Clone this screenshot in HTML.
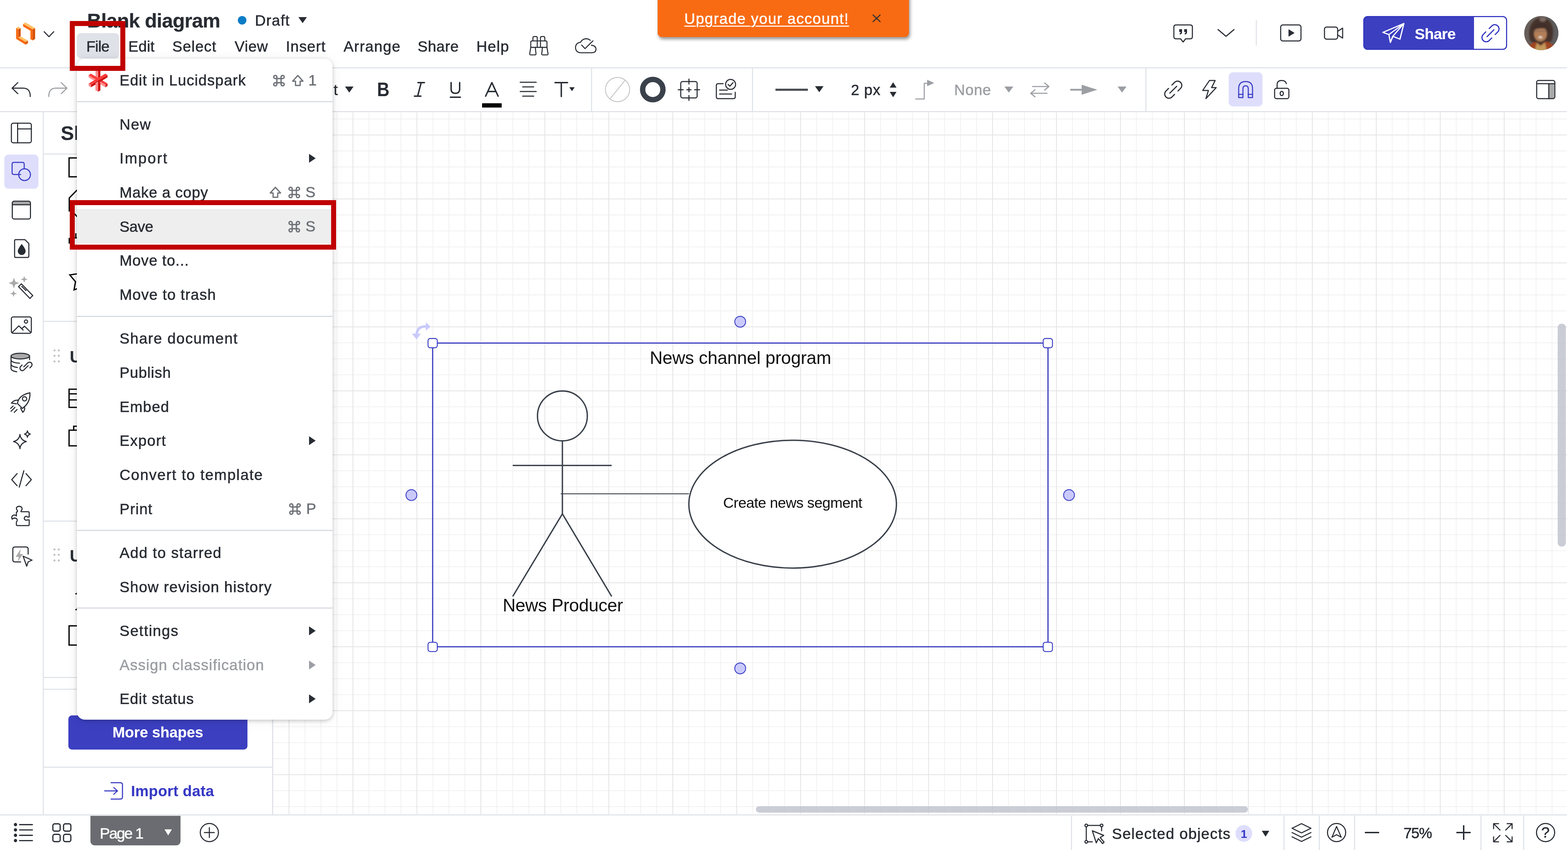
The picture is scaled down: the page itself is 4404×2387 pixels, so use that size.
<!DOCTYPE html>
<html><head><meta charset="utf-8"><title>Blank diagram</title>
<style>
html,body{margin:0;padding:0;background:#fff;}
body{width:4404px;height:2387px;position:relative;overflow:hidden;font-family:'Liberation Sans', sans-serif;}
.a{position:absolute;box-sizing:border-box;}
.t{position:absolute;white-space:pre;line-height:1;-webkit-text-stroke:0.7px currentColor;}
svg{overflow:visible}
.k{fill:none;stroke:#282c33;stroke-width:4;stroke-linecap:round;stroke-linejoin:round}
.g{fill:none;stroke:#9b9ea3;stroke-width:4;stroke-linecap:round;stroke-linejoin:round}
.bl{fill:none;stroke:#3a3dc4;stroke-width:4;stroke-linecap:round;stroke-linejoin:round}
</style></head><body>
<div id="root" style="position:absolute;left:0;top:0;width:4404px;height:2387px;will-change:transform;">
<div class="a" style="left:765px;top:313px;width:3639px;height:1976px;background-color:#fff;background-image:linear-gradient(to right,#e3e3e5 2px,transparent 2px),linear-gradient(to bottom,#e3e3e5 2px,transparent 2px),linear-gradient(to right,#f0f0f1 2px,transparent 2px),linear-gradient(to bottom,#f0f0f1 2px,transparent 2px);background-size:179.6500px 179.6500px,179.6500px 179.6500px,44.9125px 44.9125px,44.9125px 44.9125px;background-position:45.70px 65.05px;"></div>
<svg class="a" style="left:0;top:0" width="4404" height="2387" viewBox="0 0 4404 2387"><rect x="1215.2" y="963.4" width="1728.3" height="852.9" fill="none" stroke="#3538bd" stroke-width="3.2"/><g fill="none" stroke="#3a414a" stroke-width="3.8" stroke-linecap="butt"><circle cx="1579.6" cy="1168" r="70"/><path d="M1579.6 1238V1443M1440 1307.2H1718M1579.6 1443L1440 1675M1579.6 1443L1718 1675"/><ellipse cx="2226.3" cy="1415.8" rx="291.5" ry="179.5" fill="#fff"/></g><path d="M1575 1386.7H1935" stroke="#3a414a" stroke-width="2.5" fill="none"/><rect x="1202.2" y="950.6" width="26" height="26" rx="6" fill="#fff" stroke="#3a3dc4" stroke-width="2.6"/><rect x="2930.0" y="950.6" width="26" height="26" rx="6" fill="#fff" stroke="#3a3dc4" stroke-width="2.6"/><rect x="1202.2" y="1803.7" width="26" height="26" rx="6" fill="#fff" stroke="#3a3dc4" stroke-width="2.6"/><rect x="2930.0" y="1803.7" width="26" height="26" rx="6" fill="#fff" stroke="#3a3dc4" stroke-width="2.6"/><circle cx="2079.0" cy="903.5" r="15.3" fill="#c9c9fb" stroke="#3a3dc4" stroke-width="2.4"/><circle cx="1155.5" cy="1390.3" r="15.3" fill="#c9c9fb" stroke="#3a3dc4" stroke-width="2.4"/><circle cx="3002.5" cy="1390.3" r="15.3" fill="#c9c9fb" stroke="#3a3dc4" stroke-width="2.4"/><circle cx="2079.0" cy="1877.0" r="15.3" fill="#c9c9fb" stroke="#3a3dc4" stroke-width="2.4"/><g fill="none" stroke="#c9c9fb" stroke-width="7"><path d="M1170 940 Q1172 915 1198 917"/></g><path d="M1196 905 L1209 917 L1196 929Z M1157 937 L1170 953 L1182 937Z" fill="#c9c9fb"/></svg>
<span class="t" style="left:1825.0px;top:979.7px;font-size:50px;font-weight:400;color:#111;letter-spacing:-0.24px;-webkit-text-stroke:0;">News channel program</span>
<span class="t" style="left:2031.0px;top:1390.9px;font-size:41.5px;font-weight:400;color:#111;letter-spacing:-0.70px;-webkit-text-stroke:0;">Create news segment</span>
<span class="t" style="left:1412.0px;top:1674.7px;font-size:50px;font-weight:400;color:#111;letter-spacing:-0.33px;-webkit-text-stroke:0;">News Producer</span>
<div class="a" style="left:2123.0px;top:2263.5px;width:1382.0px;height:18.5px;background:rgba(190,194,204,.82);border-radius:10px;"></div>
<div class="a" style="left:4375.0px;top:909.0px;width:22.5px;height:625.5px;background:rgba(190,194,204,.82);border-radius:11px;"></div>
<div class="a" style="left:0.0px;top:313.0px;width:122.0px;height:1976.0px;background:#fff;"></div>
<div class="a" style="left:120.0px;top:313.0px;width:647.0px;height:1976.0px;background:#fff;border-left:3px solid #dfe3e8;border-right:3px solid #dfe3e8;"></div>
<div class="a" style="left:12.0px;top:434.0px;width:95.5px;height:96.0px;background:#dedefc;border-radius:12px;"></div>
<svg class="a" style="left:30.0px;top:344.0px;" width="60.0" height="59.0" viewBox="0 0 60 59"><g class="k" style="stroke-width:3"><rect x="2" y="2" width="56" height="55" rx="5"/><path d="M19.500 2V57M19.500 18H58"/></g></svg>
<svg class="a" style="left:32.0px;top:454.0px;" width="56.0" height="55.0" viewBox="0 0 56 55"><g class="bl" style="stroke-width:3"><path d="M26 36H7Q2 36 2 31V7Q2 2 7 2H31Q36 2 36 7V20"/><circle cx="37" cy="36.500" r="16.500"/></g></svg>
<svg class="a" style="left:32.0px;top:563.0px;" width="56.0" height="54.0" viewBox="0 0 55 54"><rect x="3" y="3" width="49" height="9" fill="#aaa"/><g class="k" style="stroke-width:3"><rect x="2" y="2" width="51" height="50" rx="5"/><path d="M2 12H53"/></g></svg>
<svg class="a" style="left:39.0px;top:671.0px;" width="44.0" height="54.0" viewBox="0 0 44 54"><g class="k" style="stroke-width:3"><path d="M5 2H31L42 13V48Q42 52 38 52H5Q2 52 2 48V5Q2 2 5 2Z"/></g><path d="M22 14Q33 28 33 34A11 11 0 0 1 11 34Q11 28 22 14Z" fill="#282c33"/></svg>
<svg class="a" style="left:24.0px;top:775.0px;" width="72.0" height="65.0" viewBox="0 0 72 65"><path d="M15 5L19 16L30 20L19 24L15 35L11 24L0 20L11 16Z M44 0L46.500 7L54 9.500L46.500 12L44 19L41.500 12L34 9.500L41.500 7Z M14 40L16.500 47L24 49.500L16.500 52L14 59L11.500 52L4 49.500L11.500 47Z" fill="#aaa"/><g class="k" style="stroke-width:3"><path d="M36 22L28 30L60 63L68 55Z"/><path d="M37 29L49 41"/></g></svg>
<svg class="a" style="left:30.0px;top:888.0px;" width="60.0" height="50.0" viewBox="0 0 60 50"><g class="k" style="stroke-width:3"><rect x="2" y="2" width="56" height="46" rx="5"/><circle cx="43" cy="15" r="4.500"/><path d="M4 46L23 27L35 39M31 35L39 28L56 45"/></g></svg>
<svg class="a" style="left:29.0px;top:990.0px;" width="64.0" height="62.0" viewBox="0 0 64 62"><ellipse cx="28" cy="10" rx="26" ry="8" fill="#aaa"/><g class="k" style="stroke-width:3"><ellipse cx="28" cy="10" rx="26" ry="8"/><path d="M2 10V46Q4 52 18 54M54 10V20M2 22Q6 29 26 30M2 34Q5 40 20 42"/><path d="M38 40L49 29Q54 25 59 29Q63 34 59 39L55 43M50 37L38 49Q34 53 29 49Q25 44 29 39L33 35" /></g></svg>
<svg class="a" style="left:28.0px;top:1100.0px;" width="62.0" height="60.0" viewBox="0 0 62 60"><g class="k" style="stroke-width:3"><path d="M21 33Q24 10 56 3Q58 30 35 47Z"/><circle cx="41" cy="20" r="6"/><path d="M24 24Q12 22 4 32L18 34M40 42Q44 50 36 58L30 46"/><path d="M14 44L3 55M20 50L12 58M9 40L2 47"/></g></svg>
<svg class="a" style="left:34.0px;top:1208.0px;" width="54.0" height="54.0" viewBox="0 0 54 54"><g class="k" style="stroke-width:3"><path d="M22 12Q24 28 40 32Q24 36 22 52Q20 36 4 32Q20 28 22 12Z"/><path d="M43 2Q44 9 51 11Q44 13 43 20Q42 13 35 11Q42 9 43 2Z"/></g></svg>
<svg class="a" style="left:31.0px;top:1320.0px;" width="59.0" height="50.0" viewBox="0 0 59 50"><g class="k" style="stroke-width:3"><path d="M17 10L2 27L17 44M42 10L57 27L42 44M36 2L23 48"/></g></svg>
<svg class="a" style="left:29.0px;top:1420.0px;" width="59.0" height="61.0" viewBox="0 0 59 61"><g class="k" style="stroke-width:3"><path d="M20 17V14Q14 7 20 3Q27 0 32 5Q35 10 30 15V17H50Q53 17 53 20V32H49Q42 27 39 35Q40 43 49 40H53V53Q53 56 50 56H20Q17 56 17 53V46Q22 40 17 36Q10 33 5 38Q2 30 8 27Q13 25 17 29V20Q17 17 20 17Z"/></g></svg>
<svg class="a" style="left:34.0px;top:1534.0px;" width="60.0" height="60.0" viewBox="0 0 60 60"><path d="M24 8L10 30H19L15 44L31 22H22Z" fill="#aaa"/><g class="k" style="stroke-width:3"><path d="M45 22V8Q45 2 39 2H8Q2 2 2 8V38Q2 44 8 44H24"/><path d="M31 28L56 39L45 44L41 56Z" fill="#fff"/></g></svg>
<span class="t" style="left:170.5px;top:346.1px;font-size:56px;font-weight:700;color:#282c33;letter-spacing:0.00px;-webkit-text-stroke:0.15px currentColor;">Shapes</span>
<div class="a" style="left:123.0px;top:430.5px;width:641.0px;height:3.0px;background:#dfe3e8;"></div>
<div class="a" style="left:123.0px;top:900.9px;width:641.0px;height:3.0px;background:#dfe3e8;"></div>
<div class="a" style="left:123.0px;top:1461.5px;width:641.0px;height:3.0px;background:#dfe3e8;"></div>
<div class="a" style="left:123.0px;top:1900.5px;width:641.0px;height:3.0px;background:#dfe3e8;"></div>
<div class="a" style="left:123.0px;top:1933.5px;width:641.0px;height:3.0px;background:#dfe3e8;"></div>
<div class="a" style="left:123.0px;top:2152.5px;width:641.0px;height:3.0px;background:#dfe3e8;"></div>
<div class="a" style="left:191.5px;top:2008.5px;width:503.0px;height:96.0px;background:#3c3fc0;border-radius:10px;"></div>
<span class="t" style="left:316.0px;top:2036.4px;font-size:42px;font-weight:700;color:#fff;letter-spacing:-0.18px;-webkit-text-stroke:0.15px currentColor;">More shapes</span>
<span class="t" style="left:368.0px;top:2201.4px;font-size:42px;font-weight:700;color:#3639c4;letter-spacing:0.43px;-webkit-text-stroke:0.15px currentColor;">Import data</span>
<svg class="a" style="left:292.0px;top:2196.0px;" width="54.0" height="50.0" viewBox="0 0 54.0 50.0"><path class="bl" style="stroke:#3639c4;stroke-width:3" d="M20 2H46Q52 2 52 8V42Q52 48 46 48H20M2 25H38M27.500 15.500L38 25L27.500 34.500"/></svg>
<svg class="a" style="left:0;top:0" width="300" height="2000" viewBox="0 0 300 2000"><g fill="none" stroke="#000" stroke-width="3.6"><rect x="194" y="443.500" width="60" height="53" /><path d="M230 520L194.500 556V594" /><path d="M205 596L222 614M204 668H230M213 655V668" /><path d="M194.500 668V684" /><path d="M230 767L196 772L212 791L208 814L230 806" /><path d="M254 1093H194V1144H254M194 1106H254M194 1123H254" /><path d="M254 1208H207V1197H254M207 1208H194V1252H254" /><rect x="194" y="1757.500" width="60" height="54" /><path d="M212 1668.500L216 1666M212 1713L216 1710.500" /></g></svg>
<div class="a" style="left:150.0px;top:980.5px;width:6.0px;height:6.0px;background:#c4c6c9;border-radius:50%;"></div>
<div class="a" style="left:162.0px;top:980.5px;width:6.0px;height:6.0px;background:#c4c6c9;border-radius:50%;"></div>
<div class="a" style="left:150.0px;top:996.0px;width:6.0px;height:6.0px;background:#c4c6c9;border-radius:50%;"></div>
<div class="a" style="left:162.0px;top:996.0px;width:6.0px;height:6.0px;background:#c4c6c9;border-radius:50%;"></div>
<div class="a" style="left:150.0px;top:1011.5px;width:6.0px;height:6.0px;background:#c4c6c9;border-radius:50%;"></div>
<div class="a" style="left:162.0px;top:1011.5px;width:6.0px;height:6.0px;background:#c4c6c9;border-radius:50%;"></div>
<div class="a" style="left:150.0px;top:1539.5px;width:6.0px;height:6.0px;background:#c4c6c9;border-radius:50%;"></div>
<div class="a" style="left:162.0px;top:1539.5px;width:6.0px;height:6.0px;background:#c4c6c9;border-radius:50%;"></div>
<div class="a" style="left:150.0px;top:1555.0px;width:6.0px;height:6.0px;background:#c4c6c9;border-radius:50%;"></div>
<div class="a" style="left:162.0px;top:1555.0px;width:6.0px;height:6.0px;background:#c4c6c9;border-radius:50%;"></div>
<div class="a" style="left:150.0px;top:1570.5px;width:6.0px;height:6.0px;background:#c4c6c9;border-radius:50%;"></div>
<div class="a" style="left:162.0px;top:1570.5px;width:6.0px;height:6.0px;background:#c4c6c9;border-radius:50%;"></div>
<span class="t" style="left:196.0px;top:978.6px;font-size:46px;font-weight:700;color:#282c33;letter-spacing:0.00px;-webkit-text-stroke:0.15px currentColor;">U</span>
<span class="t" style="left:196.0px;top:1538.1px;font-size:46px;font-weight:700;color:#282c33;letter-spacing:0.00px;-webkit-text-stroke:0.15px currentColor;">U</span>
<div class="a" style="left:0.0px;top:0.0px;width:4404.0px;height:190.0px;background:#fff;"></div>
<div class="a" style="left:0.0px;top:188.5px;width:4404.0px;height:3.0px;background:#dfe3e8;"></div>
<div class="a" style="left:0.0px;top:191.5px;width:4404.0px;height:120.0px;background:#fff;"></div>
<div class="a" style="left:0.0px;top:311.5px;width:4404.0px;height:3.0px;background:#dfe3e8;"></div>
<svg class="a" style="left:0;top:0" width="200" height="190" viewBox="0 0 200 190"><g transform="translate(30,50) scale(0.06447)"><path d="M235 445L335 500V860L650 1050V1170L235 915Z" fill="#f96b13"/><path d="M335 500L435 450V800L335 860Z" fill="#d4500a"/><path d="M235 445L335 385L435 450L335 500Z" fill="#ffc266"/><path d="M335 860L435 805L755 995L650 1050Z" fill="#ffc266"/><path d="M650 1050L755 995V1105L650 1170Z" fill="#dc5a0c"/><path d="M540 265L960 500V985L860 930V565L540 375Z" fill="#f96b13"/><path d="M960 500L1065 445V920L960 985Z" fill="#d4500a"/><path d="M540 265L640 200L1065 445L960 500Z" fill="#ffc266"/></g></svg>
<svg class="a" style="left:122.0px;top:87.0px;" width="31.0" height="19.0" viewBox="0 0 31.0 19.0"><path class="k" style="stroke-width:3" d="M2 2L15.5 16L29 2"/></svg>
<span class="t" style="left:244.5px;top:30.1px;font-size:56px;font-weight:700;color:#282c33;letter-spacing:-0.95px;-webkit-text-stroke:0.3px currentColor;">Blank diagram</span>
<div class="a" style="left:668.0px;top:45.0px;width:24.0px;height:24.0px;background:#0b7cc7;border-radius:50%;"></div>
<span class="t" style="left:716.0px;top:37.4px;font-size:42px;font-weight:400;color:#282c33;letter-spacing:1.50px;">Draft</span>
<svg class="a" style="left:838.0px;top:48.0px;" width="24.0" height="18.0" viewBox="0 0 24.0 18.0"><path d="M0 0H24L12 17Z" fill="#282c33"/></svg>
<div class="a" style="left:215.5px;top:93.0px;width:118.0px;height:71.0px;background:#dfe2e8;border-radius:11px;"></div>
<span class="t" style="left:242.5px;top:110.4px;font-size:42px;font-weight:400;color:#282c33;letter-spacing:-0.83px;">File</span>
<span class="t" style="left:360.6px;top:110.4px;font-size:42px;font-weight:400;color:#282c33;letter-spacing:0.34px;">Edit</span>
<span class="t" style="left:484.0px;top:110.4px;font-size:42px;font-weight:400;color:#282c33;letter-spacing:1.25px;">Select</span>
<span class="t" style="left:659.0px;top:110.4px;font-size:42px;font-weight:400;color:#282c33;letter-spacing:0.91px;">View</span>
<span class="t" style="left:803.0px;top:110.4px;font-size:42px;font-weight:400;color:#282c33;letter-spacing:1.19px;">Insert</span>
<span class="t" style="left:965.0px;top:110.4px;font-size:42px;font-weight:400;color:#282c33;letter-spacing:1.60px;">Arrange</span>
<span class="t" style="left:1173.0px;top:110.4px;font-size:42px;font-weight:400;color:#282c33;letter-spacing:0.73px;">Share</span>
<span class="t" style="left:1338.0px;top:110.4px;font-size:42px;font-weight:400;color:#282c33;letter-spacing:1.54px;">Help</span>
<svg class="a" style="left:0;top:0" width="1800" height="190" viewBox="0 0 1800 190"><g transform="translate(1460,80) scale(0.10093)" fill="none" stroke="#282c33" stroke-width="28" stroke-linecap="round" stroke-linejoin="round"><path d="M365 345V260Q365 225 400 225H450Q485 225 485 260V345M575 345V260Q575 225 610 225H660Q695 225 695 260V345"/><path d="M305 525V380Q305 345 340 345H720Q755 345 755 380V525M485 345V525M575 345V525M305 525H755"/><path d="M305 525L275 700Q272 735 305 735H420Q452 735 450 700L430 525M755 525L785 700Q788 735 755 735H640Q608 735 610 700L630 525"/><path d="M1990 465Q2120 480 2120 580Q2115 675 2000 675H1700Q1555 670 1550 530Q1555 400 1690 385Q1740 290 1840 285Q1910 285 1960 330"/><path d="M1720 460L1815 560L2035 345"/></g></svg>
<div class="a" style="left:1847.0px;top:-20.0px;width:706.0px;height:124.3px;background:#f96b13;border-radius:12px;box-shadow:3px 6px 10px rgba(0,0,0,.42);"></div>
<span class="t" style="left:1922.0px;top:32.4px;font-size:42px;font-weight:400;color:#fff;letter-spacing:1.80px;text-decoration:underline;text-decoration-thickness:2.5px;text-underline-offset:5px;">Upgrade your account!</span>
<svg class="a" style="left:2450.0px;top:40.0px;" width="24.0" height="23.0" viewBox="0 0 24.0 23.0"><path d="M2 2L22 21M22 2L2 21" stroke="#282c33" stroke-width="2.8" fill="none" stroke-linecap="round"/></svg>
<svg class="a" style="left:3295.0px;top:68.0px;" width="56.0" height="53.0" viewBox="0 0 56 53"><g class="k" style="stroke-width:3"><path d="M8 2H48Q54 2 54 8V35Q54 41 48 41H35L28 50L21 41H8Q2 41 2 35V8Q2 2 8 2Z"/></g><path d="M17 14h8v8q0 6-6 7l-1-3q3-1 3-4h-4zM31 14h8v8q0 6-6 7l-1-3q3-1 3-4h-4z" fill="#282c33"/></svg>
<svg class="a" style="left:3419.0px;top:81.0px;" width="49.0" height="24.0" viewBox="0 0 49.0 24.0"><path class="k" style="stroke-width:3" d="M2 2L24.5 21L47 2"/></svg>
<div class="a" style="left:3526.5px;top:57.0px;width:3.0px;height:71.0px;background:#dfe3e8;"></div>
<svg class="a" style="left:3595.0px;top:68.0px;" width="61.0" height="49.0" viewBox="0 0 61.0 49.0"><rect class="k" style="stroke-width:3" x="2" y="2" width="57" height="45" rx="6"/><path d="M24 14L41 24.5L24 35Z" fill="#282c33"/></svg>
<svg class="a" style="left:3718.0px;top:74.0px;" width="55.0" height="38.0" viewBox="0 0 55.0 38.0"><g class="k" style="stroke-width:3"><rect x="2" y="2" width="37" height="34" rx="6"/><path d="M39 14L53 5V33L39 24"/></g></svg>
<div class="a" style="left:3829.0px;top:45.0px;width:404.3px;height:95.4px;background:#3c3fc0;border-radius:12px;border:3px solid #3336c0;"></div>
<div class="a" style="left:4140.3px;top:48.0px;width:90.0px;height:89.4px;background:#fff;border-radius:0 9px 9px 0;"></div>
<svg class="a" style="left:3882.0px;top:64.0px;" width="63.0" height="57.0" viewBox="0 0 63 57"><g fill="none" stroke="#fff" stroke-width="3.4" stroke-linejoin="round"><path d="M2 27L61 2L50 46L30 38L23 55L19 33Z"/><path d="M61 2L19 33M61 2L30 38M23 55L30 38"/></g></svg>
<span class="t" style="left:3973.5px;top:73.6px;font-size:43px;font-weight:700;color:#fff;letter-spacing:-1.00px;-webkit-text-stroke:0.15px currentColor;">Share</span>
<svg class="a" style="left:0;top:0" width="4404" height="320" viewBox="0 0 4404 320"><g transform="translate(4186.3,93.3) rotate(-45)" fill="none" stroke="#2f32c2" stroke-width="3.1" stroke-linecap="round"><path d="M6.8 -11.900H17.100A11.900 11.900 0 0 1 17.100 11.900H6.800"/><path d="M-6.800 -11.900H-17.100A11.900 11.900 0 0 0 -17.100 11.900H-6.800"/><path d="M-13.600 0H13.600"/></g><g transform="translate(3295.3,251.9) rotate(-45)" fill="none" stroke="#282c33" stroke-width="3.1" stroke-linecap="round"><path d="M6.8 -11.900H17.100A11.900 11.900 0 0 1 17.100 11.900H6.800"/><path d="M-6.800 -11.900H-17.100A11.900 11.900 0 0 0 -17.100 11.900H-6.800"/><path d="M-13.600 0H13.600"/></g></svg>
<svg class="a" style="left:4281.2px;top:44.800px" width="96" height="96" viewBox="0 0 96 96"><defs><clipPath id="avc"><circle cx="48" cy="48" r="48"/></clipPath><filter id="avb" x="-20%" y="-20%" width="140%" height="140%"><feGaussianBlur stdDeviation="2.2"/></filter></defs><g clip-path="url(#avc)"><rect width="96" height="96" fill="#675e5a"/><rect x="62" width="34" height="96" fill="#5d5b5b"/><g filter="url(#avb)"><path d="M16 68Q8 30 30 11Q50 -2 70 13Q88 34 77 70Q60 80 46 80Q28 80 16 68Z" fill="#453229"/><ellipse cx="45.500" cy="50" rx="18" ry="21.500" fill="#b27f58"/><path d="M22 42Q28 20 50 20Q70 22 72 44Q60 33 46 35Q34 35 22 42Z" fill="#3f2e29"/><ellipse cx="52" cy="10" rx="9" ry="6" fill="#7d6a64"/><path d="M6 100Q10 78 32 73L46 82L60 72Q86 76 92 100Z" fill="#a04420"/><path d="M36 75L46 85L58 74L64 100L28 100Z" fill="#c29a5a"/><ellipse cx="45.500" cy="59.500" rx="5.500" ry="2.400" fill="#f3eae4"/><path d="M27 42H62" stroke="#6a5a60" stroke-width="2"/></g></g></svg>
<svg class="a" style="left:32.0px;top:230.0px;" width="56.0" height="43.0" viewBox="0 0 56 43"><path class="k" style="stroke-width:3" d="M18 2L2 17.5L18 33M2 17.5H32Q53 17 53 41"/></svg>
<svg class="a" style="left:134.0px;top:230.0px;" width="56.0" height="43.0" viewBox="0 0 56 43"><path class="g" style="stroke-width:3" d="M38 2L54 17.5L38 33M54 17.5H24Q3 17 3 41"/></svg>
<span class="t" style="left:937.0px;top:232.4px;font-size:42px;font-weight:400;color:#282c33;letter-spacing:0.00px;">t</span>
<svg class="a" style="left:969.0px;top:243.0px;" width="24.0" height="18.0" viewBox="0 0 24.0 18.0"><path d="M0 0H24L12 17Z" fill="#282c33"/></svg>
<span class="t" style="left:1059.0px;top:222.6px;font-size:56px;font-weight:700;color:#282c33;letter-spacing:0.00px;-webkit-text-stroke:0;transform:scaleX(.86);transform-origin:left;">B</span>
<svg class="a" style="left:1162.0px;top:230.0px;" width="32.0" height="42.0" viewBox="0 0 32 42"><path class="k" style="stroke-width:4" d="M12 2H30M2 40H20M21 2L11 40"/></svg>
<svg class="a" style="left:1262.0px;top:230.0px;" width="34.0" height="46.0" viewBox="0 0 34 46"><path class="k" style="stroke-width:4" d="M5 2V20Q5 32 17 32Q29 32 29 20V2M3 43H31"/></svg>
<svg class="a" style="left:1362.0px;top:230.0px;" width="39.0" height="42.0" viewBox="0 0 39 42"><path class="k" style="stroke-width:4" d="M2 40L19.5 2L37 40M8 27H31"/></svg>
<div class="a" style="left:1354.0px;top:290.0px;width:55.0px;height:12.0px;background:#000;"></div>
<svg class="a" style="left:1459.0px;top:229.0px;" width="49.0" height="43.0" viewBox="0 0 49 43"><path class="k" style="stroke-width:3" d="M2 2H47M9 15H40M2 28H47M9 41H40"/></svg>
<svg class="a" style="left:1557.0px;top:229.0px;" width="57.0" height="44.0" viewBox="0 0 57 44"><path class="k" style="stroke-width:4" d="M2 3H37M19.5 3V42"/><path d="M42 16H57L49.5 27Z" fill="#282c33"/></svg>
<div class="a" style="left:1660.0px;top:191.5px;width:3.0px;height:120.0px;background:#dfe3e8;"></div>
<svg class="a" style="left:1698.0px;top:215.0px;" width="73.0" height="73.0" viewBox="0 0 73.0 73.0"><circle cx="36.5" cy="36.5" r="34" fill="#fff" stroke="#c4c4c4" stroke-width="2.4"/><path d="M15 63L58 10" stroke="#c4c4c4" stroke-width="2.4"/></svg>
<svg class="a" style="left:1797.0px;top:215.0px;" width="73.0" height="73.0" viewBox="0 0 73.0 73.0"><circle cx="36.5" cy="36.5" r="28.5" fill="#fff" stroke="#3a414a" stroke-width="15"/></svg>
<svg class="a" style="left:1905.0px;top:222.0px;" width="60.0" height="60.0" viewBox="0 0 60 60"><g class="k" style="stroke-width:3"><rect x="7" y="7" width="46" height="46" rx="5"/><path d="M30 0V14M30 46V60M0 30H14M46 30H60M24 30H36M30 24V36"/></g></svg>
<svg class="a" style="left:2009.0px;top:221.0px;" width="60.0" height="58.0" viewBox="0 0 60 58"><g class="k" style="stroke-width:3"><path d="M22 14H8Q3 14 3 19V51Q3 56 8 56H51Q56 56 56 51V38"/><path d="M12 32H34M12 43H46"/><circle cx="43" cy="16" r="14" fill="#fff"/><path d="M36 16L41 21L50 11"/></g></svg>
<div class="a" style="left:2112.0px;top:191.5px;width:3.0px;height:120.0px;background:#dfe3e8;"></div>
<div class="a" style="left:2178.0px;top:248.5px;width:91.0px;height:6.0px;background:#4a4f55;"></div>
<svg class="a" style="left:2289.0px;top:242.0px;" width="24.0" height="18.0" viewBox="0 0 24.0 18.0"><path d="M0 0H24L12 17Z" fill="#282c33"/></svg>
<span class="t" style="left:2390.0px;top:232.4px;font-size:42px;font-weight:400;color:#282c33;letter-spacing:1.04px;">2 px</span>
<svg class="a" style="left:2499.0px;top:231.0px;" width="19.0" height="42.0" viewBox="0 0 19.0 42.0"><path d="M0 15H19L9.5 0ZM0 27H19L9.5 42Z" fill="#282c33"/></svg>
<svg class="a" style="left:2570.0px;top:222.0px;" width="56.0" height="58.0" viewBox="0 0 56 58"><path class="g" style="stroke-width:3" d="M2 56H26V12H34"/><path d="M34 2L54 11L34 20Z" fill="#9b9ea3"/></svg>
<span class="t" style="left:2680.0px;top:232.4px;font-size:42px;font-weight:400;color:#9b9ea3;letter-spacing:0.86px;">None</span>
<svg class="a" style="left:2821.0px;top:243.0px;" width="25.0" height="18.0" viewBox="0 0 25.0 18.0"><path d="M0 0H25L12.5 17Z" fill="#9b9ea3"/></svg>
<svg class="a" style="left:2892.0px;top:231.0px;" width="57.0" height="42.0" viewBox="0 0 57 42"><path class="g" style="stroke-width:3" d="M8 12H54M42 2L54 12L42 22M49 31H3M15 21L3 31L15 41"/></svg>
<svg class="a" style="left:3006.0px;top:236.0px;" width="76.0" height="32.0" viewBox="0 0 76 32"><path d="M2 16H40" stroke="#9b9ea3" stroke-width="5" stroke-linecap="round"/><path d="M32 2L76 16L32 30Z" fill="#9b9ea3"/></svg>
<svg class="a" style="left:3139.0px;top:243.0px;" width="25.0" height="18.0" viewBox="0 0 25.0 18.0"><path d="M0 0H25L12.5 17Z" fill="#9b9ea3"/></svg>
<div class="a" style="left:3217.0px;top:191.5px;width:3.0px;height:120.0px;background:#dfe3e8;"></div>
<svg class="a" style="left:3375.0px;top:224.0px;" width="43.0" height="55.0" viewBox="0 0 43 55"><path class="k" style="stroke-width:3" d="M22 2H38L28 22H41L12 53L19 30H3Z"/></svg>
<div class="a" style="left:3450.5px;top:203.0px;width:95.5px;height:96.0px;background:#dedefc;border-radius:12px;"></div>
<svg class="a" style="left:3477.0px;top:227.0px;" width="43.0" height="49.0" viewBox="0 0 43 49"><g class="bl" style="stroke-width:3"><path d="M2 47V22Q2 2 21.5 2Q41 2 41 22V47H29V22Q29 14 21.5 14Q14 14 14 22V47Z"/><path d="M2 38H14M29 38H41"/></g></svg>
<svg class="a" style="left:3578.0px;top:224.0px;" width="44.0" height="55.0" viewBox="0 0 44 55"><g class="k" style="stroke-width:3"><rect x="2" y="24" width="40" height="29" rx="5"/><path d="M9 24V14Q9 2 22 2Q33 2 35 11"/><ellipse cx="22" cy="38.5" rx="4.5" ry="6"/></g></svg>
<svg class="a" style="left:4314.0px;top:224.0px;" width="55.0" height="55.0" viewBox="0 0 55 55"><rect x="36" y="11" width="15" height="41" fill="#aaa"/><g class="k" style="stroke-width:3"><rect x="2" y="2" width="51" height="51" rx="5"/><path d="M2 11H53M36 11V53"/></g></svg>
<div class="a" style="left:0.0px;top:2287.0px;width:4404.0px;height:100.0px;background:#fff;border-top:3px solid #dfe3e8;"></div>
<svg class="a" style="left:0;top:0" width="220" height="2387" viewBox="0 0 220 2387"><circle cx="43.5" cy="2315.7" r="4.6" fill="#282c33"/><path d="M55 2315.7H91" stroke="#282c33" stroke-width="3.4" stroke-linecap="round"/><circle cx="43.5" cy="2330.6" r="4.6" fill="#282c33"/><path d="M55 2330.6H91" stroke="#282c33" stroke-width="3.4" stroke-linecap="round"/><circle cx="43.5" cy="2345.7" r="4.6" fill="#282c33"/><path d="M55 2345.7H91" stroke="#282c33" stroke-width="3.4" stroke-linecap="round"/><circle cx="43.5" cy="2360.6" r="4.6" fill="#282c33"/><path d="M55 2360.6H91" stroke="#282c33" stroke-width="3.4" stroke-linecap="round"/><rect x="148.5" y="2313.5" width="20.500" height="20.500" rx="5" fill="none" stroke="#282c33" stroke-width="3.4"/><rect x="178.5" y="2313.5" width="20.500" height="20.500" rx="5" fill="none" stroke="#282c33" stroke-width="3.4"/><rect x="148.5" y="2343.0" width="20.500" height="20.500" rx="5" fill="none" stroke="#282c33" stroke-width="3.4"/><rect x="178.5" y="2343.0" width="20.500" height="20.500" rx="5" fill="none" stroke="#282c33" stroke-width="3.4"/></svg>
<div class="a" style="left:254.3px;top:2290.5px;width:253.2px;height:83.3px;background:#6b6c71;border-radius:0 0 12px 12px;"></div>
<span class="t" style="left:280.3px;top:2319.1px;font-size:43px;font-weight:400;color:#fff;letter-spacing:-2.60px;">Page 1</span>
<svg class="a" style="left:461.7px;top:2329.0px;" width="20.8" height="17.0" viewBox="0 0 20.8 17.0"><path d="M0 0H20.800L10.400 17Z" fill="#fff"/></svg>
<svg class="a" style="left:560.0px;top:2310.0px;" width="56.0" height="56.0" viewBox="0 0 56.0 56.0"><g class="k" style="stroke-width:3"><circle cx="28" cy="28" r="25.500"/><path d="M28 14V42M14 28H42"/></g></svg>
<div class="a" style="left:3007.5px;top:2290.5px;width:3.0px;height:96.5px;background:#dfe3e8;"></div>
<div class="a" style="left:3604.5px;top:2290.5px;width:3.0px;height:96.5px;background:#dfe3e8;"></div>
<div class="a" style="left:3703.5px;top:2290.5px;width:3.0px;height:96.5px;background:#dfe3e8;"></div>
<div class="a" style="left:3802.7px;top:2290.5px;width:3.0px;height:96.5px;background:#dfe3e8;"></div>
<div class="a" style="left:4158.2px;top:2290.5px;width:3.0px;height:96.5px;background:#dfe3e8;"></div>
<div class="a" style="left:4278.3px;top:2290.5px;width:3.0px;height:96.5px;background:#dfe3e8;"></div>
<svg class="a" style="left:3046.0px;top:2313.0px;" width="58.0" height="58.0" viewBox="0 0 58 58"><g class="k" style="stroke-width:3"><path d="M5 9V47M9 5H44M48 9V20M9 51H22"/><circle cx="5" cy="5" r="3.800" fill="#fff"/><circle cx="48" cy="5" r="3.800" fill="#fff"/><circle cx="5" cy="51" r="3.800" fill="#fff"/><path d="M22 20L33 54L39 42L51 56L55 52L44 39L54 33Z" fill="#fff"/></g></svg>
<span class="t" style="left:3123.0px;top:2321.4px;font-size:42px;font-weight:400;color:#282c33;letter-spacing:1.62px;">Selected objects</span>
<div class="a" style="left:3470.0px;top:2317.2px;width:47.2px;height:47.2px;background:#dedefc;border-radius:50%;"></div>
<span class="t" style="left:3485.0px;top:2325.9px;font-size:32px;font-weight:700;color:#3639c4;letter-spacing:0.00px;-webkit-text-stroke:0.15px currentColor;">1</span>
<svg class="a" style="left:3543.5px;top:2332.5px;" width="21.0" height="16.5" viewBox="0 0 21.0 16.5"><path d="M0 0H21L10.500 16.500Z" fill="#282c33"/></svg>
<svg class="a" style="left:3627.0px;top:2311.0px;" width="57.0" height="55.0" viewBox="0 0 57 55"><g class="k" style="stroke-width:3"><path d="M28.500 2L55 15L28.500 28L2 15Z"/><path d="M2 27L28.500 40L55 27M2 39L28.500 52L55 39"/></g></svg>
<svg class="a" style="left:3726.0px;top:2310.0px;" width="56.0" height="56.0" viewBox="0 0 56.0 56.0"><g class="k" style="stroke-width:3"><circle cx="28" cy="28" r="25.500"/><path d="M28 11L41 41L28 34L15 41Z"/></g></svg>
<div class="a" style="left:3832.5px;top:2336.0px;width:41.0px;height:4.0px;background:#282c33;border-radius:2px;"></div>
<span class="t" style="left:3942.0px;top:2319.4px;font-size:42px;font-weight:400;color:#282c33;letter-spacing:-1.78px;">75%</span>
<div class="a" style="left:4090.0px;top:2336.0px;width:41.0px;height:4.0px;background:#282c33;border-radius:2px;"></div>
<div class="a" style="left:4108.5px;top:2317.0px;width:4.0px;height:41.5px;background:#282c33;border-radius:2px;"></div>
<svg class="a" style="left:4193.0px;top:2311.0px;" width="56.0" height="55.0" viewBox="0 0 56 55"><g class="k" style="stroke-width:3"><path d="M2 16V2H16M2 2L20 20M40 2H54V16M54 2L36 20M2 39V53H16M2 53L20 35M54 39V53H40M54 53L36 35"/></g></svg>
<svg class="a" style="left:4313.0px;top:2310.0px;" width="56.0" height="56.0" viewBox="0 0 56.0 56.0"><circle class="k" style="stroke-width:3" cx="28" cy="28" r="25.500"/></svg>
<span class="t" style="left:4329.0px;top:2317.4px;font-size:42px;font-weight:400;color:#282c33;letter-spacing:0.00px;">?</span>
<div class="a" style="left:215.5px;top:164.5px;width:718.5px;height:1856.0px;background:#fff;border-radius:22px;box-shadow:0 3px 12px rgba(0,0,0,.20),0 2px 32px rgba(0,0,0,.08);"></div>
<div class="a" style="left:215.5px;top:587.0px;width:718.5px;height:95.5px;background:#eeeeee;"></div>
<span class="t" style="left:335.8px;top:205.4px;font-size:42px;font-weight:400;color:#282c33;letter-spacing:1.33px;">Edit in Lucidspark</span>
<span class="t" style="left:335.8px;top:328.5px;font-size:42px;font-weight:400;color:#282c33;letter-spacing:1.58px;">New</span>
<span class="t" style="left:335.8px;top:424.2px;font-size:42px;font-weight:400;color:#282c33;letter-spacing:2.93px;">Import</span>
<span class="t" style="left:335.8px;top:519.7px;font-size:42px;font-weight:400;color:#282c33;letter-spacing:1.01px;">Make a copy</span>
<span class="t" style="left:335.8px;top:615.7px;font-size:42px;font-weight:400;color:#282c33;letter-spacing:-0.34px;">Save</span>
<span class="t" style="left:335.8px;top:711.4px;font-size:42px;font-weight:400;color:#282c33;letter-spacing:1.09px;">Move to...</span>
<span class="t" style="left:335.8px;top:807.1px;font-size:42px;font-weight:400;color:#282c33;letter-spacing:1.31px;">Move to trash</span>
<span class="t" style="left:335.8px;top:930.2px;font-size:42px;font-weight:400;color:#282c33;letter-spacing:1.77px;">Share document</span>
<span class="t" style="left:335.8px;top:1025.7px;font-size:42px;font-weight:400;color:#282c33;letter-spacing:0.99px;">Publish</span>
<span class="t" style="left:335.8px;top:1121.7px;font-size:42px;font-weight:400;color:#282c33;letter-spacing:1.41px;">Embed</span>
<span class="t" style="left:335.8px;top:1217.4px;font-size:42px;font-weight:400;color:#282c33;letter-spacing:1.66px;">Export</span>
<span class="t" style="left:335.8px;top:1313.2px;font-size:42px;font-weight:400;color:#282c33;letter-spacing:1.95px;">Convert to template</span>
<span class="t" style="left:335.8px;top:1408.7px;font-size:42px;font-weight:400;color:#282c33;letter-spacing:1.34px;">Print</span>
<span class="t" style="left:335.8px;top:1531.7px;font-size:42px;font-weight:400;color:#282c33;letter-spacing:1.68px;">Add to starred</span>
<span class="t" style="left:335.8px;top:1627.7px;font-size:42px;font-weight:400;color:#282c33;letter-spacing:1.49px;">Show revision history</span>
<span class="t" style="left:335.8px;top:1750.7px;font-size:42px;font-weight:400;color:#282c33;letter-spacing:1.85px;">Settings</span>
<span class="t" style="left:335.8px;top:1846.7px;font-size:42px;font-weight:400;color:#9b9ea3;letter-spacing:1.47px;">Assign classification</span>
<span class="t" style="left:335.8px;top:1942.3px;font-size:42px;font-weight:400;color:#282c33;letter-spacing:1.21px;">Edit status</span>
<div class="a" style="left:215.5px;top:284.0px;width:718.5px;height:3.0px;background:#d3d9e0;"></div>
<div class="a" style="left:215.5px;top:886.5px;width:718.5px;height:3.0px;background:#d3d9e0;"></div>
<div class="a" style="left:215.5px;top:1488.0px;width:718.5px;height:3.0px;background:#d3d9e0;"></div>
<div class="a" style="left:215.5px;top:1706.2px;width:718.5px;height:3.0px;background:#d3d9e0;"></div>
<svg class="a" style="left:868.0px;top:432.0px;" width="18.5" height="25.0" viewBox="0 0 18.5 25.0"><path d="M0 0V25L18.5 12.5Z" fill="#282c33"/></svg>
<svg class="a" style="left:868.0px;top:1225.2px;" width="18.5" height="25.0" viewBox="0 0 18.5 25.0"><path d="M0 0V25L18.5 12.5Z" fill="#282c33"/></svg>
<svg class="a" style="left:868.0px;top:1758.5px;" width="18.5" height="25.0" viewBox="0 0 18.5 25.0"><path d="M0 0V25L18.5 12.5Z" fill="#282c33"/></svg>
<svg class="a" style="left:868.0px;top:1854.5px;" width="18.5" height="25.0" viewBox="0 0 18.5 25.0"><path d="M0 0V25L18.5 12.5Z" fill="#9b9ea3"/></svg>
<svg class="a" style="left:868.0px;top:1950.1px;" width="18.5" height="25.0" viewBox="0 0 18.5 25.0"><path d="M0 0V25L18.5 12.5Z" fill="#282c33"/></svg>
<svg class="a" style="left:767.0px;top:209.5px;" width="33.0" height="33.0" viewBox="0 0 33 33"><path fill="none" stroke="#6d7177" stroke-width="3.7" d="M10.600 10.600H22.400V22.400H10.600ZM10.600 10.600V6.200A4.400 4.400 0 1 0 6.200 10.600H10.600M22.400 10.600V6.200A4.400 4.400 0 1 1 26.800 10.600H22.400M10.600 22.400V26.800A4.400 4.400 0 1 1 6.200 22.400H10.600M22.400 22.400V26.800A4.400 4.400 0 1 0 26.800 22.400H22.400"/></svg>
<svg class="a" style="left:820.0px;top:209.7px;" width="33.0" height="32.0" viewBox="0 0 33 32"><path fill="none" stroke="#6d7177" stroke-width="3.4" stroke-linejoin="round" d="M16.500 2L31 18H23V30H10V18H2Z"/></svg>
<span class="t" style="left:866.0px;top:204.6px;font-size:42px;font-weight:400;color:#6d7177;letter-spacing:0.00px;">1</span>
<svg class="a" style="left:757.0px;top:524.0px;" width="33.0" height="32.0" viewBox="0 0 33 32"><path fill="none" stroke="#6d7177" stroke-width="3.4" stroke-linejoin="round" d="M16.500 2L31 18H23V30H10V18H2Z"/></svg>
<svg class="a" style="left:810.0px;top:523.8px;" width="33.0" height="33.0" viewBox="0 0 33 33"><path fill="none" stroke="#6d7177" stroke-width="3.7" d="M10.600 10.600H22.400V22.400H10.600ZM10.600 10.600V6.200A4.400 4.400 0 1 0 6.200 10.600H10.600M22.400 10.600V6.200A4.400 4.400 0 1 1 26.800 10.600H22.400M10.600 22.400V26.800A4.400 4.400 0 1 1 6.200 22.400H10.600M22.400 22.400V26.800A4.400 4.400 0 1 0 26.800 22.400H22.400"/></svg>
<span class="t" style="left:858.0px;top:518.9px;font-size:42px;font-weight:400;color:#6d7177;letter-spacing:0.00px;">S</span>
<svg class="a" style="left:810.0px;top:619.8px;" width="33.0" height="33.0" viewBox="0 0 33 33"><path fill="none" stroke="#6d7177" stroke-width="3.7" d="M10.600 10.600H22.400V22.400H10.600ZM10.600 10.600V6.200A4.400 4.400 0 1 0 6.200 10.600H10.600M22.400 10.600V6.200A4.400 4.400 0 1 1 26.800 10.600H22.400M10.600 22.400V26.800A4.400 4.400 0 1 1 6.200 22.400H10.600M22.400 22.400V26.800A4.400 4.400 0 1 0 26.800 22.400H22.400"/></svg>
<span class="t" style="left:858.0px;top:614.9px;font-size:42px;font-weight:400;color:#6d7177;letter-spacing:0.00px;">S</span>
<svg class="a" style="left:812.0px;top:1412.8px;" width="33.0" height="33.0" viewBox="0 0 33 33"><path fill="none" stroke="#6d7177" stroke-width="3.7" d="M10.600 10.600H22.400V22.400H10.600ZM10.600 10.600V6.200A4.400 4.400 0 1 0 6.200 10.600H10.600M22.400 10.600V6.200A4.400 4.400 0 1 1 26.800 10.600H22.400M10.600 22.400V26.800A4.400 4.400 0 1 1 6.200 22.400H10.600M22.400 22.400V26.800A4.400 4.400 0 1 0 26.800 22.400H22.400"/></svg>
<span class="t" style="left:860.0px;top:1407.9px;font-size:42px;font-weight:400;color:#6d7177;letter-spacing:0.00px;">P</span>
<svg class="a" style="left:0;top:0" width="400" height="300" viewBox="0 0 400 300"><g transform="translate(230,180) scale(0.07163)"><path d="M535 200H635V1080L535 1025Z" fill="#ff8f8f"/><path d="M635 200H725V1030L635 1080Z" fill="#d01212"/><path d="M262 440L925 805V910L262 520Z" fill="#ff8f8f"/><path d="M925 805L1005 760V855L925 910Z" fill="#d01212"/><path d="M262 440L350 372L1005 760L925 805Z" fill="#ff3b3b"/><path d="M355 810L1005 430V520L355 910Z" fill="#d01212"/><path d="M265 765L355 810V910L265 855Z" fill="#ff8f8f"/><path d="M265 765L920 372L1005 430L355 810Z" fill="#ff3b3b"/><path d="M535 735L635 685V1080L535 1025Z" fill="#ff8f8f"/><path d="M635 685L725 735V1030L635 1080Z" fill="#d01212"/></g></svg>
<div class="a" style="left:196.0px;top:59.0px;width:156.0px;height:140.0px;border:14px solid #c00000;"></div>
<div class="a" style="left:196.0px;top:562.0px;width:748.0px;height:139.0px;border:14px solid #c00000;"></div>
<div class="a" style="left:4401.0px;top:0.0px;width:3.0px;height:2387.0px;background:#fff;"></div>
</div>
</body></html>
